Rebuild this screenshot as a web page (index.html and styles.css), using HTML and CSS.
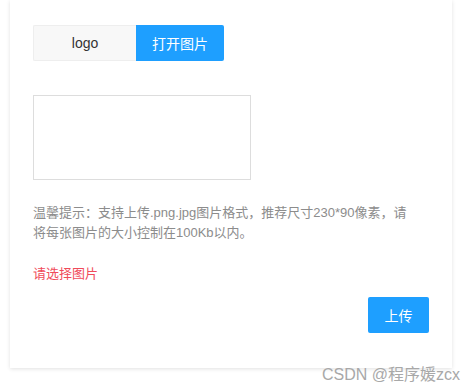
FILE: index.html
```html
<!DOCTYPE html>
<html lang="zh">
<head>
<meta charset="utf-8">
<link rel="stylesheet" href="styles.css">
</head>
<body>
<div class="card">
  <div class="btn-group">
    <div class="btn-logo">logo</div>
    <div class="btn-blue btn-open">打开图片</div>
  </div>
  <div class="preview"></div>
  <p class="tip">温馨提示：支持上传.png.jpg图片格式，推荐尺寸230*90像素，请将每张图片的大小控制在100Kb以内。</p>
  <p class="error">请选择图片</p>
  <div class="actions">
    <div class="btn-blue btn-upload">上传</div>
  </div>
</div>
<div class="watermark">CSDN @程序媛zcx</div>
</body>
</html>
```

FILE: styles.css
```css
* { box-sizing: border-box; }
html, body { margin: 0; padding: 0; background: #fff; }
body {
  width: 474px;
  height: 392px;
  position: relative;
  overflow: hidden;
  font-family: "Liberation Sans", "Noto Sans CJK SC", sans-serif;
}
.card {
  margin-left: 10px;
  width: 442px;
  height: 368px;
  background: #fff;
  box-shadow: 0 1px 4px rgba(0,0,0,0.12);
  padding: 25px 23px 0 23px;
  display: flex;
  flex-direction: column;
}
.btn-group { display: flex; height: 36px; }
.btn-logo {
  width: 103px;
  height: 36px;
  background: #f8f8f8;
  border: 1px solid #eee;
  border-right: none;
  color: #333;
  font-size: 14px;
  display: flex;
  align-items: center;
  justify-content: center;
  border-radius: 2px 0 0 2px;
}
.btn-blue {
  background: #1e9fff;
  color: #fff;
  font-size: 14px;
  display: flex;
  align-items: center;
  justify-content: center;
  border-radius: 2px;
}
.btn-open { width: 88px; height: 36px; border-radius: 0 2px 2px 0; }
.preview {
  margin-top: 34px;
  width: 218px;
  height: 85px;
  border: 1px solid #ddd;
}
.tip {
  margin: 23px 0 0 0;
  width: 384px;
  font-size: 13px;
  line-height: 20px;
  color: #8c8c8c;
}
.error {
  margin: 21px 0 0 0;
  font-size: 13px;
  line-height: 20px;
  color: #f04b5a;
}
.actions { display: flex; justify-content: flex-end; margin-top: 13px; }
.btn-upload { width: 61px; height: 36px; }
.watermark {
  position: absolute;
  right: 14px;
  top: 364px;
  font-size: 16px;
  line-height: 22px;
  color: #a8a8a8;
  white-space: nowrap;
}
```
